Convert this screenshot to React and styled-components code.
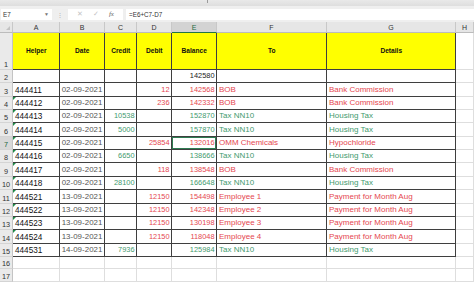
import React from 'react';
import styled, { createGlobalStyle, css } from 'styled-components';

const RED = '#e5474f';
const GREEN = '#3f9a6e';
const DARK = '#3f3f3f';
const LIGHT = '#dedede';

const GlobalStyle = createGlobalStyle`
  html, body {
    margin: 0;
    padding: 0;
    background: #ffffff;
    overflow: hidden;
  }
  body {
    font-family: "Liberation Sans", Arial, sans-serif;
  }
`;

const Window = styled.div`
  width: 474px;
  height: 282px;
  display: flex;
  flex-direction: column;
  overflow: hidden;
`;

const TopStrip = styled.div`
  height: 6px;
  background: linear-gradient(#e9e9e9, #dedede);
  display: flex;
  justify-content: center;
  padding-left: 0;
  position: relative;
`;

const Handle = styled.div`
  width: 1px;
  height: 3px;
  margin-left: -59px;
  background: #9a9a9a;
`;

const FormulaBar = styled.div`
  height: 16px;
  background: #efefef;
  display: flex;
  align-items: center;
  gap: 0;
`;

const NameBox = styled.div`
  width: 51px;
  height: 11px;
  margin-left: 1px;
  background: #fff;
  display: flex;
  align-items: center;
  justify-content: space-between;
  padding: 0 3px 0 2px;
  box-sizing: border-box;
  font-size: 6.3px;
  color: #333;
`;

const Caret = styled.span`
  font-size: 5px;
  color: #777;
`;

const Dots = styled.span`
  width: 16px;
  text-align: center;
  font-size: 6px;
  color: #aaa;
`;

const FxBox = styled.div`
  width: 55px;
  height: 11px;
  background: #fff;
  display: flex;
  align-items: center;
  justify-content: space-around;
  padding: 0 4px;
  box-sizing: border-box;
  font-size: 7px;
  color: #c4c4c4;
`;

const Fx = styled.span`
  font-family: "Liberation Serif", serif;
  font-style: italic;
  color: #666;
  font-size: 7px;
`;

const FormulaInput = styled.div`
  flex: 1;
  height: 11px;
  margin-left: 3px;
  background: #fff;
  display: flex;
  align-items: center;
  padding-left: 3px;
  font-size: 6.3px;
  color: #333;
`;

const Sheet = styled.div`
  display: grid;
  grid-template-columns: 13px 47px 45px 32px 35px 45px 110px 129px 18px;
  grid-template-rows: 11px 37px 13px 14px 13px 13px 14px 13px 13px 14px 13px 14px 13px 13px 14px 13px 12px 13px;
`;

const Corner = styled.div`
  background: #e6e6e6;
  border-right: 1px solid #c8c8c8;
  border-bottom: 1px solid #bcbcbc;
  box-sizing: border-box;
  position: relative;
  &::after {
    content: '';
    position: absolute;
    right: 2px;
    bottom: 2px;
    border-left: 4px solid transparent;
    border-bottom: 4px solid #c2c2c2;
  }
`;

const ColHead = styled.div`
  background: ${({ $sel }) => ($sel ? '#d3d3d3' : '#e6e6e6')};
  color: ${({ $sel }) => ($sel ? '#1f6b43' : '#333')};
  border-right: 1px solid #c8c8c8;
  border-bottom: 1px solid ${({ $sel }) => ($sel ? '#217346' : '#bcbcbc')};
  box-sizing: border-box;
  display: flex;
  align-items: center;
  justify-content: center;
  font-size: 7px;
`;

const RowHead = styled.div`
  background: ${({ $sel }) => ($sel ? '#d8d8d8' : '#eaeaea')};
  color: ${({ $sel }) => ($sel ? '#1f6b43' : '#333')};
  border-right: 1px solid #c4c4c4;
  border-bottom: 1px solid #d4d4d4;
  box-sizing: border-box;
  display: flex;
  align-items: flex-end;
  justify-content: center;
  padding-bottom: 1px;
  font-size: 7.3px;
  line-height: 1;
`;

const Cell = styled.div`
  box-sizing: border-box;
  border-right: 1px solid ${({ $boxed }) => ($boxed ? DARK : LIGHT)};
  border-bottom: 1px solid ${({ $boxed }) => ($boxed ? DARK : LIGHT)};
  background: ${({ $bg }) => $bg || '#fff'};
  color: ${({ $color }) => $color || '#222'};
  display: flex;
  align-items: center;
  justify-content: ${({ $align }) =>
    $align === 'right' ? 'flex-end' : $align === 'center' ? 'center' : 'flex-start'};
  padding: 0 1.5px 0 2px;
  font-size: 7.4px;
  white-space: nowrap;
  overflow: hidden;
  position: relative;
  line-height: 1;
  ${({ $sel }) =>
    $sel &&
    css`
      box-shadow: inset 0 0 0 1px #2e7d52;
    `}
`;

const HeaderCell = styled(Cell)`
  font-weight: bold;
  font-size: 6.6px;
  color: #111;
`;

const HelperCell = styled(Cell)`
  align-items: flex-end;
  padding-bottom: 1px;
  font-size: 8.2px;
  color: #111;
  ${({ $flag }) =>
    $flag &&
    css`
      &::before {
        content: '';
        position: absolute;
        left: 0;
        top: 0;
        border-top: 3px solid #1e8a46;
        border-right: 3px solid transparent;
      }
    `}
`;

const DateCell = styled(Cell)`
  color: #555;
  font-size: 7.9px;
  letter-spacing: 0.05px;
`;

const TextCell = styled(Cell)`
  font-size: 8px;
`;

const headers = ['Helper', 'Date', 'Credit', 'Debit', 'Balance', 'To', 'Details'];
const letters = ['A', 'B', 'C', 'D', 'E', 'F', 'G', 'H'];

const pay = 'Payment for Month Aug';
const rows = [
  { n: 2, e: '142580', t: 'black' },
  { n: 3, a: '444411', b: '02-09-2021', d: '12', e: '142568', f: 'BOB', g: 'Bank Commission', t: 'red' },
  { n: 4, a: '444412', b: '02-09-2021', d: '236', e: '142332', f: 'BOB', g: 'Bank Commission', t: 'red', flag: true },
  { n: 5, a: '444413', b: '02-09-2021', c: '10538', e: '152870', f: 'Tax NN10', g: 'Housing Tax', t: 'green', flag: true },
  { n: 6, a: '444414', b: '02-09-2021', c: '5000', e: '157870', f: 'Tax NN10', g: 'Housing Tax', t: 'green', flag: true },
  { n: 7, a: '444415', b: '02-09-2021', d: '25854', e: '132016', f: 'OMM Chemicals', g: 'Hypochloride', t: 'red', flag: true },
  { n: 8, a: '444416', b: '02-09-2021', c: '6650', e: '138666', f: 'Tax NN10', g: 'Housing Tax', t: 'green', flag: true },
  { n: 9, a: '444417', b: '02-09-2021', d: '118', e: '138548', f: 'BOB', g: 'Bank Commission', t: 'red', flag: true },
  { n: 10, a: '444418', b: '02-09-2021', c: '28100', e: '166648', f: 'Tax NN10', g: 'Housing Tax', t: 'green', flag: true },
  { n: 11, a: '444521', b: '13-09-2021', d: '12150', e: '154498', f: 'Employee 1', g: pay, t: 'red', flag: true },
  { n: 12, a: '444522', b: '13-09-2021', d: '12150', e: '142348', f: 'Employee 2', g: pay, t: 'red', flag: true },
  { n: 13, a: '444523', b: '13-09-2021', d: '12150', e: '130198', f: 'Employee 3', g: pay, t: 'red', flag: true },
  { n: 14, a: '444524', b: '13-09-2021', d: '12150', e: '118048', f: 'Employee 4', g: pay, t: 'red', flag: true },
  { n: 15, a: '444531', b: '14-09-2021', c: '7936', e: '125984', f: 'Tax NN10', g: 'Housing Tax', t: 'green' },
];

const tone = (t) => (t === 'red' ? RED : t === 'green' ? GREEN : '#222');

const DataRow = ({ r }) => {
  const col = tone(r.t);
  const sel = r.n === 7;
  return (
    <>
      <RowHead $sel={sel}>{r.n}</RowHead>
      <HelperCell $boxed $flag={r.flag}>{r.a}</HelperCell>
      <DateCell $boxed $align="right">{r.b}</DateCell>
      <Cell $boxed $align="right" $color={GREEN}>{r.c}</Cell>
      <Cell $boxed $align="right" $color={RED}>{r.d}</Cell>
      <Cell $boxed $align="right" $color={col} $sel={sel}>{r.e}</Cell>
      <TextCell $boxed $color={col}>{r.f}</TextCell>
      <TextCell $boxed $color={col}>{r.g}</TextCell>
      <Cell />
    </>
  );
};

const EmptyRow = ({ n }) => (
  <>
    <RowHead>{n}</RowHead>
    {letters.map((l) => (
      <Cell key={l} />
    ))}
  </>
);

export default function App() {
  return (
    <Window>
      <GlobalStyle />
      <TopStrip>
        <Handle />
      </TopStrip>
      <FormulaBar>
        <NameBox>
          E7<Caret>▼</Caret>
        </NameBox>
        <Dots>⋮</Dots>
        <FxBox>
          <span>✕</span>
          <span>✓</span>
          <Fx>fx</Fx>
        </FxBox>
        <FormulaInput>=E6+C7-D7</FormulaInput>
      </FormulaBar>
      <Sheet>
        <Corner />
        {letters.map((l) => (
          <ColHead key={l} $sel={l === 'E'}>
            {l}
          </ColHead>
        ))}
        <RowHead>1</RowHead>
        {headers.map((h) => (
          <HeaderCell key={h} $boxed $bg="#ffff00" $align="center">
            {h}
          </HeaderCell>
        ))}
        <Cell />
        {rows.map((r) => (
          <DataRow key={r.n} r={r} />
        ))}
        <EmptyRow n={16} />
        <EmptyRow n={17} />
      </Sheet>
    </Window>
  );
}
